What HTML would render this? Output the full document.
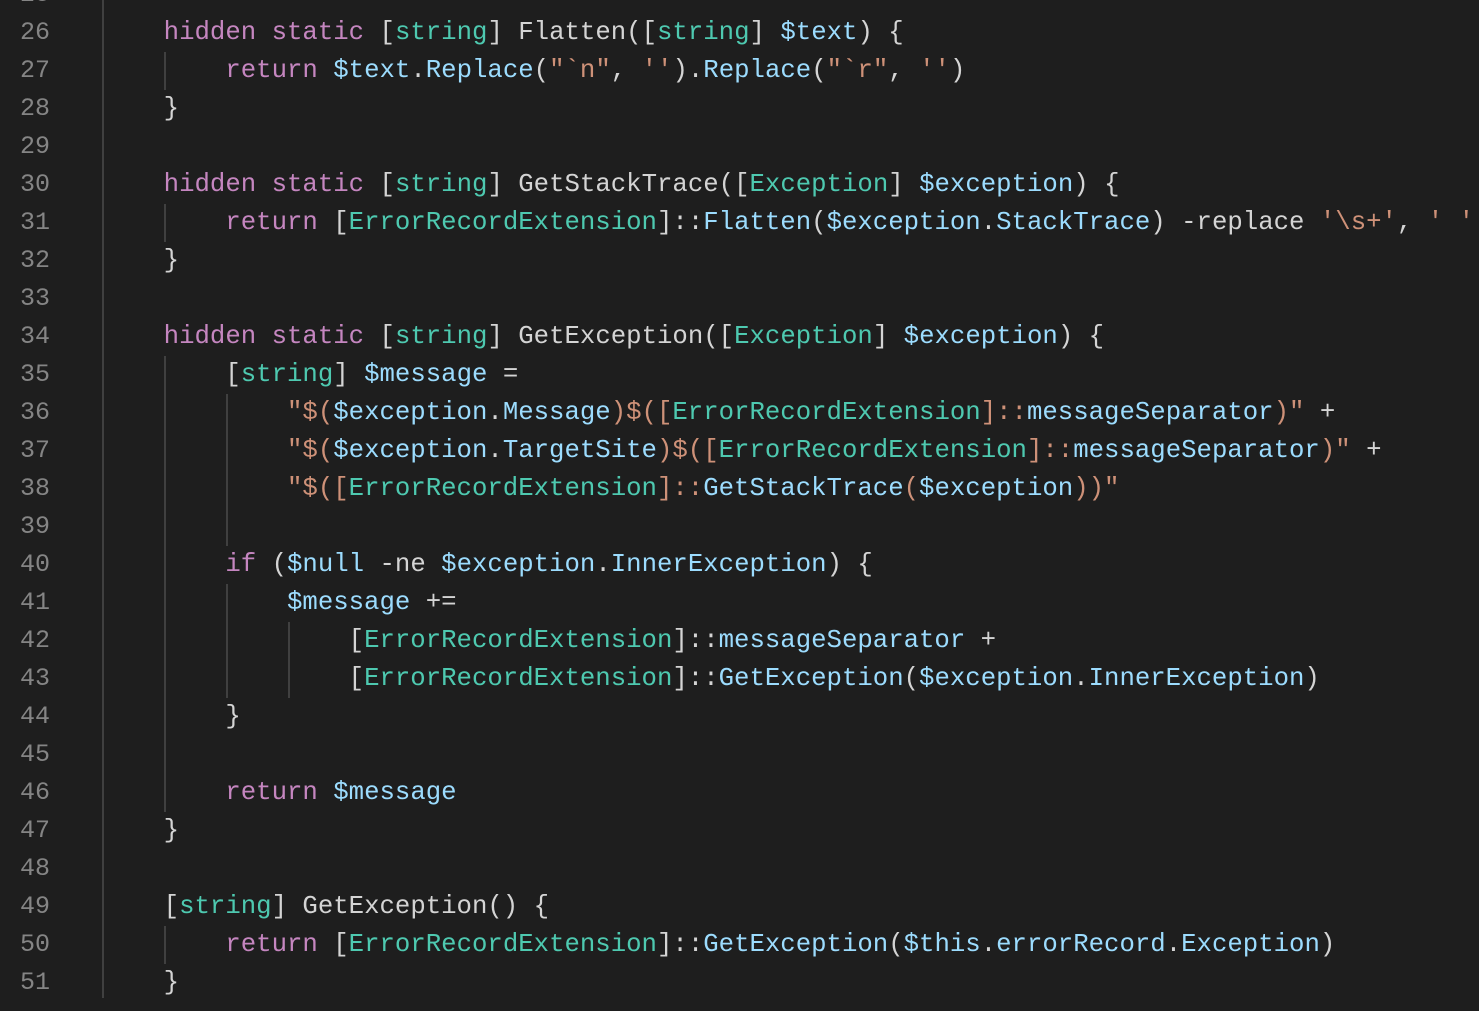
<!DOCTYPE html><html><head><meta charset="utf-8"><style>
body{margin:0;background:#1e1e1e;width:1479px;height:1009px;overflow:hidden;position:relative;font-family:"Liberation Mono",monospace;font-size:25.7px}
#w{position:absolute;left:0;top:2px;width:1479px;height:1009px}
.l{position:absolute;left:102px;height:38px;line-height:38px;white-space:pre;color:#d4d4d4}
.n{position:absolute;left:0;width:50px;text-align:right;height:38px;line-height:38px;color:#858585;font-size:25px}
.g{position:absolute;width:2px;background:#404040}
.k{color:#c586c0}.t{color:#4ec9b0}.v{color:#9cdcfe}.s{color:#ce9178}
</style></head><body><div id="w">
<div class="g" style="left:102px;top:-2px;height:998px"></div>
<div class="g" style="left:164px;top:50px;height:38px"></div>
<div class="g" style="left:164px;top:202px;height:38px"></div>
<div class="g" style="left:164px;top:354px;height:456px"></div>
<div class="g" style="left:226px;top:392px;height:152px"></div>
<div class="g" style="left:226px;top:582px;height:114px"></div>
<div class="g" style="left:288px;top:620px;height:76px"></div>
<div class="g" style="left:164px;top:924px;height:38px"></div>

<div class="n" style="top:-26px">25</div>
<div class="n" style="top:12px">26</div><div class="l" style="top:12px">    <span class="k">hidden</span> <span class="k">static</span> [<span class="t">string</span>] Flatten([<span class="t">string</span>] <span class="v">$text</span>) {</div>
<div class="n" style="top:50px">27</div><div class="l" style="top:50px">        <span class="k">return</span> <span class="v">$text</span>.<span class="v">Replace</span>(<span class="s">"`n"</span>, <span class="s">''</span>).<span class="v">Replace</span>(<span class="s">"`r"</span>, <span class="s">''</span>)</div>
<div class="n" style="top:88px">28</div><div class="l" style="top:88px">    }</div>
<div class="n" style="top:126px">29</div>
<div class="n" style="top:164px">30</div><div class="l" style="top:164px">    <span class="k">hidden</span> <span class="k">static</span> [<span class="t">string</span>] GetStackTrace([<span class="t">Exception</span>] <span class="v">$exception</span>) {</div>
<div class="n" style="top:202px">31</div><div class="l" style="top:202px">        <span class="k">return</span> [<span class="t">ErrorRecordExtension</span>]::<span class="v">Flatten</span>(<span class="v">$exception</span>.<span class="v">StackTrace</span>) -replace <span class="s">'\s+'</span>, <span class="s">' '</span></div>
<div class="n" style="top:240px">32</div><div class="l" style="top:240px">    }</div>
<div class="n" style="top:278px">33</div>
<div class="n" style="top:316px">34</div><div class="l" style="top:316px">    <span class="k">hidden</span> <span class="k">static</span> [<span class="t">string</span>] GetException([<span class="t">Exception</span>] <span class="v">$exception</span>) {</div>
<div class="n" style="top:354px">35</div><div class="l" style="top:354px">        [<span class="t">string</span>] <span class="v">$message</span> =</div>
<div class="n" style="top:392px">36</div><div class="l" style="top:392px">            <span class="s">"$(</span><span class="v">$exception</span>.<span class="v">Message</span><span class="s">)$([</span><span class="t">ErrorRecordExtension</span><span class="s">]::</span><span class="v">messageSeparator</span><span class="s">)"</span> +</div>
<div class="n" style="top:430px">37</div><div class="l" style="top:430px">            <span class="s">"$(</span><span class="v">$exception</span>.<span class="v">TargetSite</span><span class="s">)$([</span><span class="t">ErrorRecordExtension</span><span class="s">]::</span><span class="v">messageSeparator</span><span class="s">)"</span> +</div>
<div class="n" style="top:468px">38</div><div class="l" style="top:468px">            <span class="s">"$([</span><span class="t">ErrorRecordExtension</span><span class="s">]::</span><span class="v">GetStackTrace</span><span class="s">(</span><span class="v">$exception</span><span class="s">))"</span></div>
<div class="n" style="top:506px">39</div>
<div class="n" style="top:544px">40</div><div class="l" style="top:544px">        <span class="k">if</span> (<span class="v">$null</span> -ne <span class="v">$exception</span>.<span class="v">InnerException</span>) {</div>
<div class="n" style="top:582px">41</div><div class="l" style="top:582px">            <span class="v">$message</span> +=</div>
<div class="n" style="top:620px">42</div><div class="l" style="top:620px">                [<span class="t">ErrorRecordExtension</span>]::<span class="v">messageSeparator</span> +</div>
<div class="n" style="top:658px">43</div><div class="l" style="top:658px">                [<span class="t">ErrorRecordExtension</span>]::<span class="v">GetException</span>(<span class="v">$exception</span>.<span class="v">InnerException</span>)</div>
<div class="n" style="top:696px">44</div><div class="l" style="top:696px">        }</div>
<div class="n" style="top:734px">45</div>
<div class="n" style="top:772px">46</div><div class="l" style="top:772px">        <span class="k">return</span> <span class="v">$message</span></div>
<div class="n" style="top:810px">47</div><div class="l" style="top:810px">    }</div>
<div class="n" style="top:848px">48</div>
<div class="n" style="top:886px">49</div><div class="l" style="top:886px">    [<span class="t">string</span>] GetException() {</div>
<div class="n" style="top:924px">50</div><div class="l" style="top:924px">        <span class="k">return</span> [<span class="t">ErrorRecordExtension</span>]::<span class="v">GetException</span>(<span class="v">$this</span>.<span class="v">errorRecord</span>.<span class="v">Exception</span>)</div>
<div class="n" style="top:962px">51</div><div class="l" style="top:962px">    }</div>
</div></body></html>
